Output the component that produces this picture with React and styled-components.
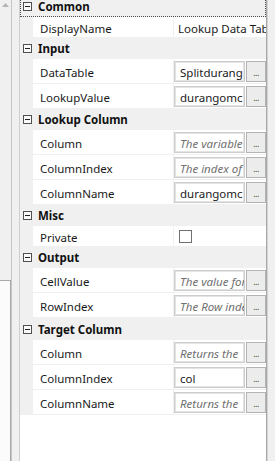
import React from "react";
import styled, { createGlobalStyle } from "styled-components";

const Global = createGlobalStyle`
  html, body { margin: 0; padding: 0; }
  body { background: #f0f0f0; font-family: "Noto Sans", "Open Sans", sans-serif; }
  #root { width: 275px; height: 461px; }
`;

const Page = styled.div`
  display: flex;
  width: 275px;
  height: 461px;
  overflow: hidden;
  background: #f0f0f0;
  font-family: "Noto Sans", "Open Sans", sans-serif;
  font-size: 11.5px;
  color: #1a1a1a;
`;

const LeftPanel = styled.div`
  width: 11px;
  border-right: 1px solid #c6c6c6;
  display: flex;
  flex-direction: column;
  background: #f0f0f0;
`;

const ArrowWrap = styled.div`
  height: 280px;
  display: flex;
  align-items: flex-start;
  padding: 3px 0 0 2px;
  box-sizing: border-box;
`;

const LowerBox = styled.div`
  flex: 1;
  background: #fbfbfb;
  border-top: 1px solid #a9a9a9;
  border-right: 1px solid #a9a9a9;
`;

const Gutter = styled.div`
  width: 7px;
  background: #f0f0f0;
  border-right: 1px solid #cfcfcf;
`;

const Grid = styled.div`
  width: 246px;
  background: #ffffff;
  border-right: 1px solid #a7a7a7;
  overflow: hidden;
  display: flex;
  flex-direction: column;
`;

const GridInner = styled.div`
  display: flex;
  flex-direction: column;
  margin-top: -4px;
`;

const RightStrip = styled.div`
  flex: 1;
  background: #f0f0f0;
  border-left: 1px solid #d4d4d4;
`;

const CategoryRow = styled.div`
  height: ${(p) => p.$h || 21}px;
  box-sizing: border-box;
  background: #f0f0f0;
  display: flex;
  align-items: center;
  padding-left: 2px;
  font-weight: 700;
  font-size: 11.5px;
  color: #111;
  border: ${(p) => (p.$focused ? "1px dotted #4a4a4a" : "1px solid transparent")};
`;

const Expander = styled.span`
  width: 9px;
  height: 9px;
  box-sizing: border-box;
  border: 1px solid #505050;
  background: #fafafa;
  display: inline-flex;
  align-items: center;
  justify-content: center;
  margin-right: 6px;
  &::after {
    content: "";
    width: 5px;
    height: 1px;
    background: #222;
  }
`;

const PropRow = styled.div`
  height: ${(p) => (p.$short ? 21 : 25)}px;
  box-sizing: border-box;
  display: grid;
  grid-template-columns: 13px 141px 1fr;
  border-bottom: 1px solid #f0f0f0;
`;

const Margin = styled.div`
  background: #f0f0f0;
`;

const Label = styled.div`
  display: flex;
  align-items: center;
  padding: 2px 0 0 7px;
  white-space: nowrap;
  overflow: hidden;
  color: #1a1a1a;
`;

const ValueCell = styled.div`
  border-left: 1px solid #f0f0f0;
  margin-left: -1px;
  display: flex;
  align-items: ${(p) => (p.$boxed ? "flex-start" : "center")};
  padding: ${(p) => (p.$boxed ? "2px 0 0 0" : "2px 0 0 4px")};
  gap: 1px;
  overflow: hidden;
  white-space: nowrap;
  min-width: 0;
`;

const TextBox = styled.div`
  flex: 1;
  min-width: 0;
  height: 21px;
  box-sizing: border-box;
  border: 1px solid #cdcdcd;
  box-shadow: inset 0 0 0 1px #e4e4e4;
  background: #fff;
  display: flex;
  align-items: center;
  padding: 1px 0 0 5px;
  overflow: hidden;
  white-space: nowrap;
  font-style: ${(p) => (p.$placeholder ? "italic" : "normal")};
  color: ${(p) => (p.$placeholder ? "#707070" : "#1a1a1a")};
`;

const DotsButton = styled.div`
  width: 20px;
  height: 21px;
  box-sizing: border-box;
  border: 1px solid #b3b3b3;
  background: #ececec;
  display: flex;
  align-items: flex-end;
  justify-content: center;
  padding-bottom: 4px;
  font-size: 9px;
  line-height: 9px;
  color: #444;
  letter-spacing: -0.5px;
`;

const Check = styled.div`
  width: 13px;
  height: 13px;
  box-sizing: border-box;
  border: 1px solid #6f6f6f;
  background: #fff;
  margin: -2px 0 0 1px;
`;

const data = [
  { cat: "Common", focused: true, props: [{ label: "DisplayName", text: "Lookup Data Tab", short: true }] },
  {
    cat: "Input",
    props: [
      { label: "DataTable", box: "Splitdurang" },
      { label: "LookupValue", box: "durangomc" },
    ],
  },
  {
    cat: "Lookup Column",
    props: [
      { label: "Column", box: "The variable", ph: true },
      { label: "ColumnIndex", box: "The index of", ph: true },
      { label: "ColumnName", box: "durangomc" },
    ],
  },
  { cat: "Misc", props: [{ label: "Private", check: true, short: true }] },
  {
    cat: "Output",
    props: [
      { label: "CellValue", box: "The value for", ph: true },
      { label: "RowIndex", box: "The Row index", ph: true },
    ],
  },
  {
    cat: "Target Column",
    h: 22,
    props: [
      { label: "Column", box: "Returns the", ph: true },
      { label: "ColumnIndex", box: "col" },
      { label: "ColumnName", box: "Returns the", ph: true },
    ],
  },
];

function Row({ p }) {
  return (
    <PropRow $short={p.short}>
      <Margin />
      <Label>{p.label}</Label>
      {p.box !== undefined ? (
        <ValueCell $boxed>
          <TextBox $placeholder={p.ph}>{p.box}</TextBox>
          <DotsButton>...</DotsButton>
        </ValueCell>
      ) : p.check ? (
        <ValueCell>
          <Check />
        </ValueCell>
      ) : (
        <ValueCell>{p.text}</ValueCell>
      )}
    </PropRow>
  );
}

export default function App() {
  return (
    <>
      <Global />
      <Page>
        <LeftPanel>
          <ArrowWrap>
            <svg width="7" height="4" viewBox="0 0 7 4">
              <path d="M0 4 L3.5 0 L7 4 Z" fill="#b5b5b5" />
            </svg>
          </ArrowWrap>
          <LowerBox />
        </LeftPanel>
        <Gutter />
        <Grid>
          <GridInner>
            {data.map((c) => (
              <React.Fragment key={c.cat}>
                <CategoryRow $focused={c.focused} $h={c.h}>
                  <Expander />
                  {c.cat}
                </CategoryRow>
                {c.props.map((p, i) => (
                  <Row key={i} p={p} />
                ))}
              </React.Fragment>
            ))}
          </GridInner>
        </Grid>
        <RightStrip />
      </Page>
    </>
  );
}
